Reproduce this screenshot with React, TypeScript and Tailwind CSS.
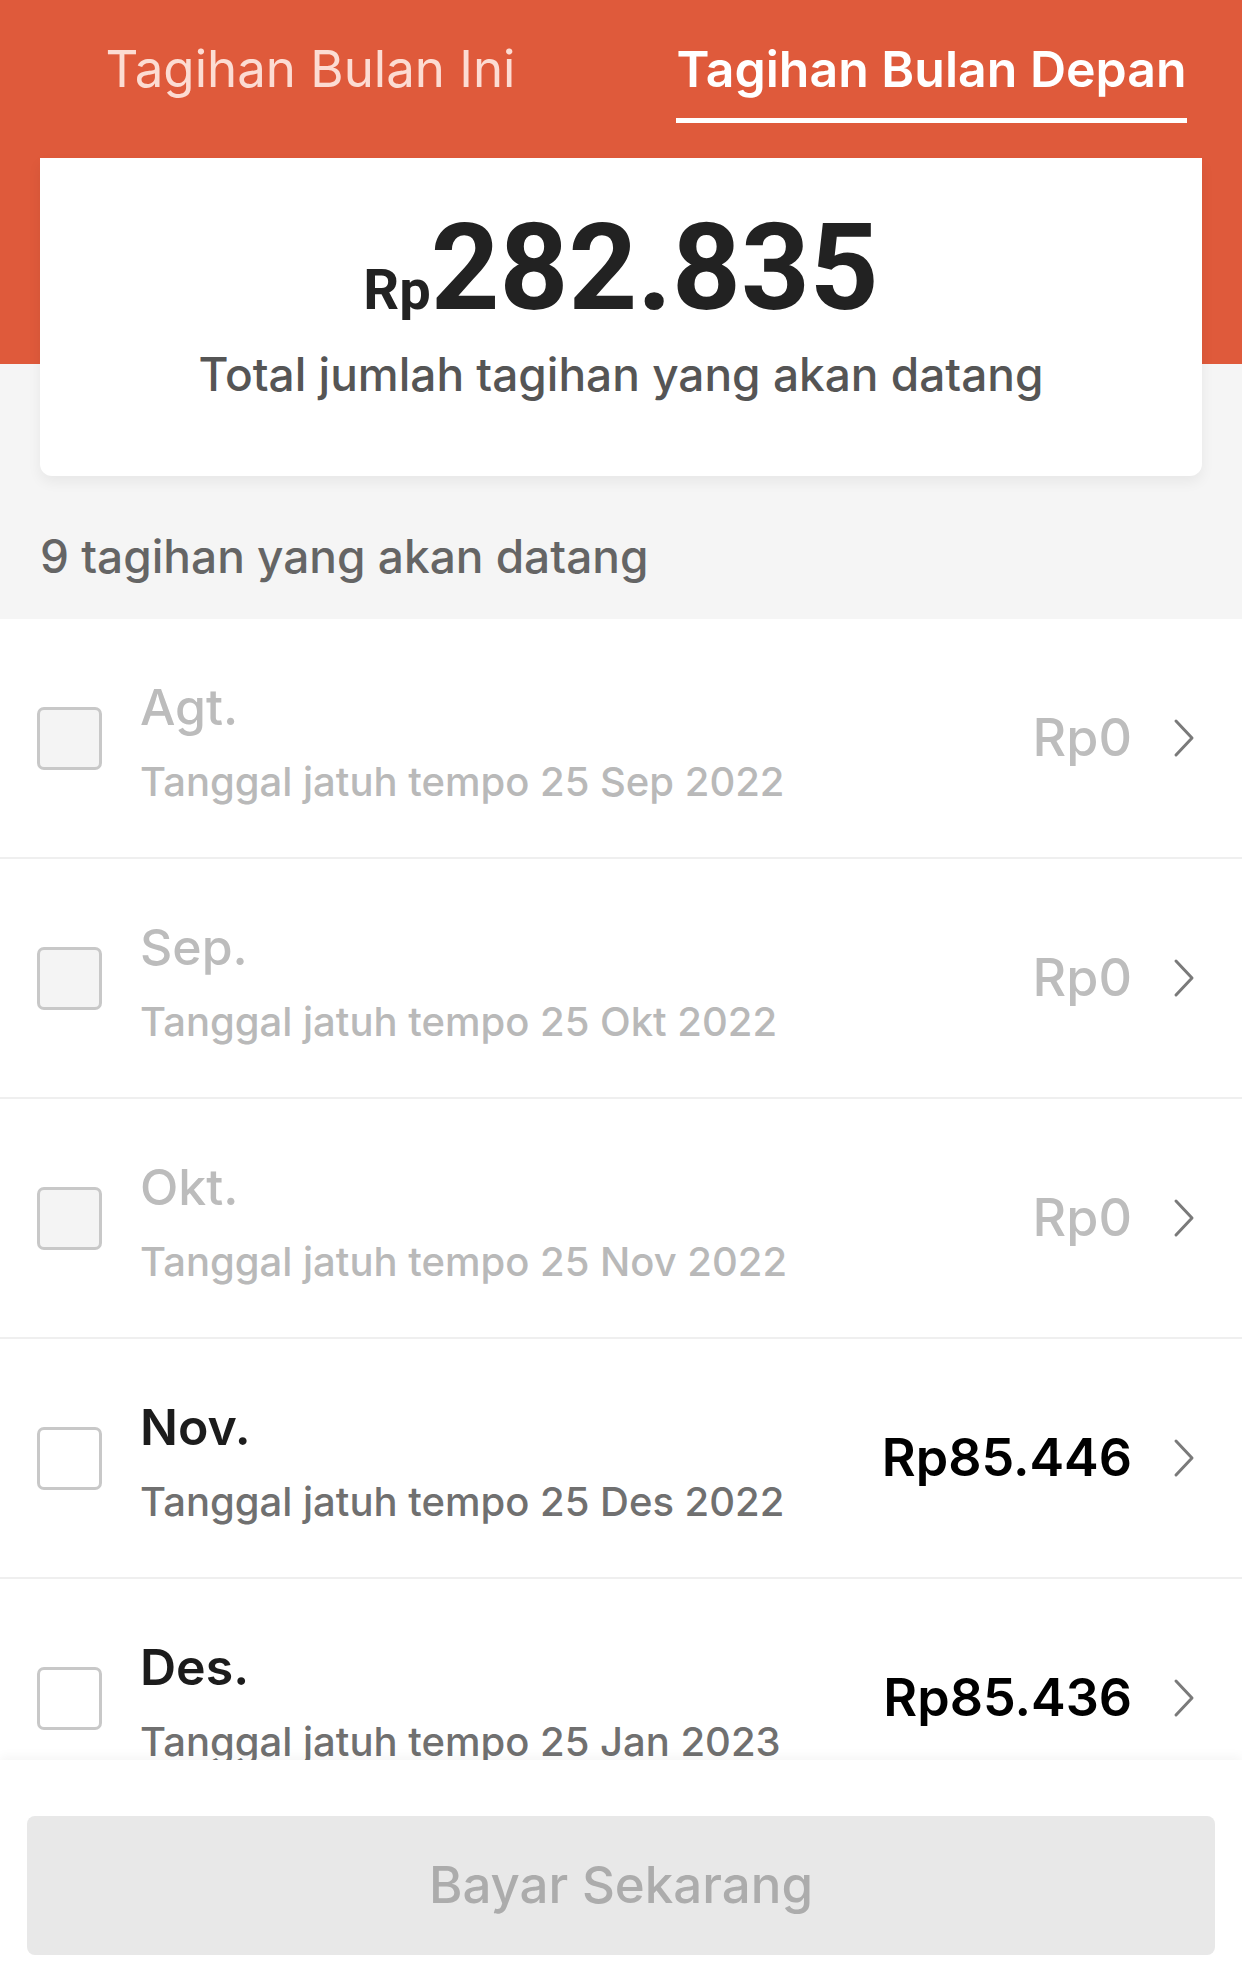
import React from "react";

type Bill = {
  month: string;
  due: string;
  amount: string;
  active: boolean;
};

const bills: Bill[] = [
  { month: "Agt.", due: "Tanggal jatuh tempo 25 Sep 2022", amount: "Rp0", active: false },
  { month: "Sep.", due: "Tanggal jatuh tempo 25 Okt 2022", amount: "Rp0", active: false },
  { month: "Okt.", due: "Tanggal jatuh tempo 25 Nov 2022", amount: "Rp0", active: false },
  { month: "Nov.", due: "Tanggal jatuh tempo 25 Des 2022", amount: "Rp85.446", active: true },
  { month: "Des.", due: "Tanggal jatuh tempo 25 Jan 2023", amount: "Rp85.436", active: true },
];

function Chevron() {
  return (
    <svg width="24" height="40" viewBox="0 0 24 40" fill="none">
      <path
        d="M4 3 L20 20 L4 37"
        stroke="#7a7a7a"
        strokeWidth="3"
        strokeLinecap="round"
        strokeLinejoin="round"
      />
    </svg>
  );
}

function BillRow({ bill }: { bill: Bill }) {
  return (
    <div className="h-[240px] flex items-center pl-[37px] pr-[46px] border-b-2 border-[#efefef] shrink-0">
      <div
        className={`w-[65px] h-[63px] rounded-[7px] border-[3px] border-[#c8c8c8] ${
          bill.active ? "bg-white" : "bg-[#f4f4f4]"
        }`}
      />
      <div className="flex-1 ml-[38px] pt-[9px] flex flex-col gap-[19px]">
        <div
          className={`text-[50px] leading-[60px] ${
            bill.active ? "text-[#1c1c1c] font-semibold" : "text-[#bcbcbc] font-medium"
          }`}
        >
          {bill.month}
        </div>
        <div
          className={`text-[40px] leading-[52px] font-medium ${
            bill.active ? "text-[#707070]" : "text-[#b9b9b9]"
          }`}
        >
          {bill.due}
        </div>
      </div>
      <div
        className={`text-[52px] leading-[60px] ${
          bill.active ? "text-black font-semibold" : "text-[#bdbdbd] font-medium"
        }`}
      >
        {bill.amount}
      </div>
      <div className="ml-[40px]">
        <Chevron />
      </div>
    </div>
  );
}

export default function App() {
  return (
    <div className="w-[1242px] h-[1981px] flex flex-col bg-[#f5f5f5] font-['Inter',sans-serif] overflow-hidden">
      <div className="bg-[linear-gradient(to_bottom,#df5a3b_364px,#f5f5f5_364px)] shrink-0">
        <div className="flex pt-[39px]">
          <div className="flex-1 flex justify-center">
            <span className="text-[51px] leading-[60px] text-[#fcdcd3]">Tagihan Bulan Ini</span>
          </div>
          <div className="flex-1 flex justify-center">
            <div className="flex flex-col">
              <span className="text-[50px] leading-[60px] font-semibold text-white">
                Tagihan Bulan Depan
              </span>
              <div className="h-[5px] mt-[19px] bg-white" />
            </div>
          </div>
        </div>
        <div className="mx-[40px] mt-[35px] h-[318px] bg-white rounded-b-[12px] shadow-[0_6px_14px_rgba(0,0,0,0.06)] flex flex-col items-center pt-[50px]">
          <div className="flex items-baseline leading-none text-[#222222] font-bold font-['Roboto',sans-serif]">
            <span className="text-[56px]">Rp</span>
            <span className="text-[120px]">282.835</span>
          </div>
          <div className="mt-[18px] text-[46px] leading-[56px] font-medium text-[#555555]">
            Total jumlah tagihan yang akan datang
          </div>
        </div>
        <div className="px-[40px] pt-[52px] pb-[35px] text-[46px] leading-[56px] font-medium text-[#656565]">
          9 tagihan yang akan datang
        </div>
      </div>
      <div className="flex-1 bg-white overflow-hidden flex flex-col">
        {bills.map((b) => (
          <BillRow key={b.month} bill={b} />
        ))}
      </div>
      <div className="h-[221px] shrink-0 bg-white shadow-[0_-4px_10px_rgba(0,0,0,0.04)] px-[27px] pt-[56px] pb-[26px]">
        <button className="w-full h-full rounded-[8px] bg-[#e8e8e8] text-[51px] font-medium text-[#acacac]">
          Bayar Sekarang
        </button>
      </div>
    </div>
  );
}
